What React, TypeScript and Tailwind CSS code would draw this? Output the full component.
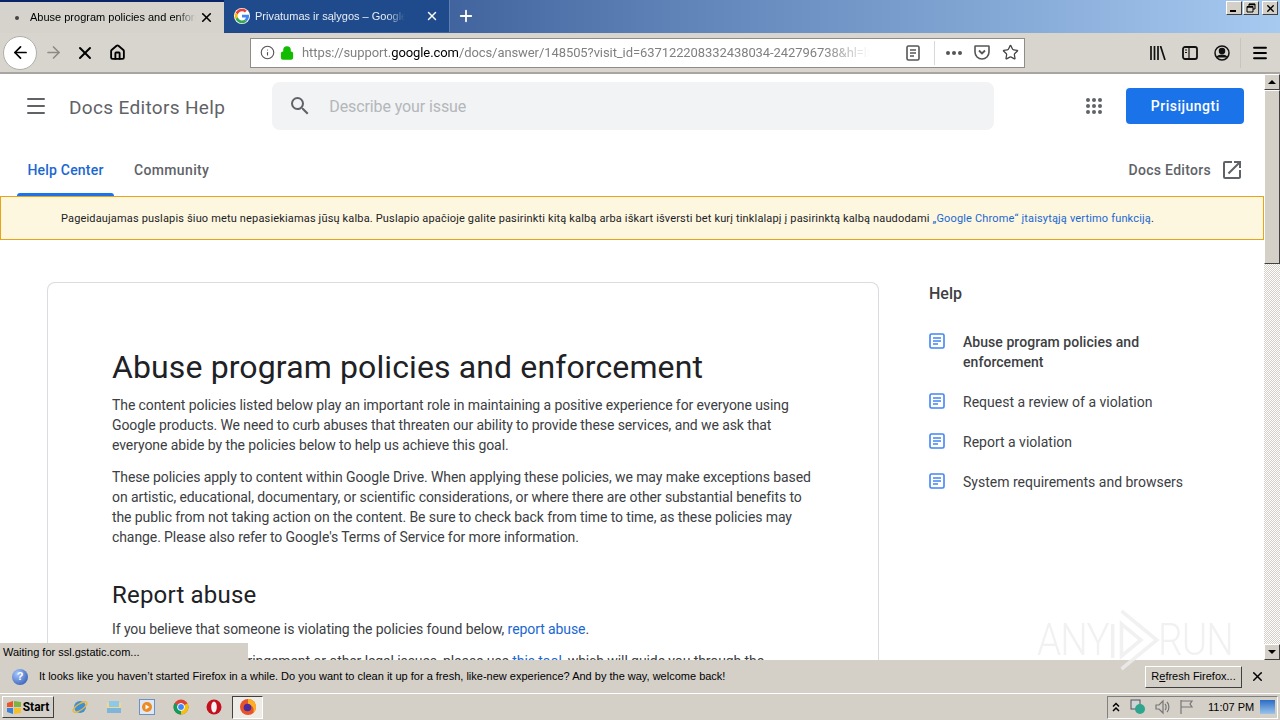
import { X, Plus, Home, Info, Lock, ArrowLeft, ArrowRight, Star, Menu } from "lucide-react";

const helpLinks = [
  "Abuse program policies and enforcement",
  "Request a review of a violation",
  "Report a violation",
  "System requirements and browsers",
];

const bevel = "border border-t-white border-l-white border-r-[#404040] border-b-[#404040] bg-[#d4d0c8]";

function DocIcon() {
  return (
    <svg width="16" height="16" viewBox="0 0 16 16" className="mt-[1px] shrink-0" fill="none" stroke="#4285f4">
      <rect x="1" y="1" width="14" height="14" rx="1.5" strokeWidth="1.6" />
      <path d="M4 5h8M4 8h8M4 11h5" strokeWidth="1.4" />
    </svg>
  );
}

function GoogleG() {
  return (
    <svg width="16" height="16" viewBox="0 0 48 48" className="shrink-0">
      <circle cx="24" cy="24" r="24" fill="#fff" />
      <path fill="#EA4335" d="M24 10c3.5 0 6.4 1.2 8.7 3.3l5.6-5.6C34.8 4.5 29.9 2.5 24 2.5 15.5 2.5 8.3 7.4 4.8 14.5l6.6 5.1C13 14.2 18 10 24 10z" />
      <path fill="#4285F4" d="M45 24.5c0-1.5-.1-2.9-.4-4.3H24v8.2h11.8c-.5 2.7-2 5-4.4 6.6l6.5 5C42.4 35.8 45 30.7 45 24.5z" />
      <path fill="#FBBC05" d="M11.4 28.4C11 27 10.7 25.5 10.7 24s.3-3 .7-4.4l-6.6-5.1C3.4 17.3 2.5 20.5 2.5 24s.9 6.7 2.3 9.5l6.6-5.1z" />
      <path fill="#34A853" d="M24 45.5c5.9 0 10.8-1.9 14.4-5.3l-6.5-5c-2 1.3-4.5 2.1-7.9 2.1-6 0-11-4.2-12.6-9.7l-6.6 5.1C8.3 40.6 15.5 45.5 24 45.5z" />
    </svg>
  );
}

function TabStrip() {
  return (
    <div className="flex h-[33px] shrink-0 bg-gradient-to-r from-[#0a246a] via-[#5b7fb4] to-[#a6caf0] font-['Liberation_Sans',sans-serif] text-[11px]">
      <div className="flex h-full w-[224px] items-center border-t-2 border-[#0a246a] bg-[#d6d3cc] pl-[15px] pr-[10px] text-black">
        <span className="mr-[11px] h-[4px] w-[4px] rounded-full bg-[#444]" />
        <span className="w-[166px] overflow-hidden whitespace-nowrap [mask-image:linear-gradient(to_right,black_88%,transparent)]">Abuse program policies and enforcement</span>
        <X size={15} strokeWidth={2.6} className="ml-auto" />
      </div>
      <div className="flex h-[32px] w-[226px] items-center border-r border-[#5f7fb0] bg-[#1f4a8c] px-[10px] text-[#e8eef6]">
        <GoogleG />
        <span className="ml-[5px] w-[150px] overflow-hidden whitespace-nowrap [mask-image:linear-gradient(to_right,black_88%,transparent)]">Privatumas ir sąlygos – Google</span>
        <X size={14} strokeWidth={2.4} className="ml-auto text-white" />
      </div>
      <Plus size={18} strokeWidth={2.4} className="ml-[7px] mt-[7px] text-white" />
      <div className="ml-auto mr-[2px] mt-[1px] flex gap-[1px]">
        <div className={`flex h-[14px] w-[16px] items-end pb-[2px] pl-[3px] ${bevel}`}>
          <span className="h-[2px] w-[6px] bg-black" />
        </div>
        <div className={`flex h-[14px] w-[16px] items-center justify-center ${bevel}`}>
          <svg width="10" height="10" viewBox="0 0 10 10" fill="none" stroke="#000">
            <path d="M3 3V1h6v5H7M1 3.5h6v5.5H1z" />
            <path d="M3 1.5h6M1 4h6" strokeWidth="1.5" />
          </svg>
        </div>
        <div className={`ml-[2px] flex h-[14px] w-[16px] items-center justify-center ${bevel}`}>
          <X size={11} strokeWidth={3} />
        </div>
      </div>
    </div>
  );
}

function Toolbar() {
  return (
    <div className="flex h-[41px] shrink-0 items-center border-b-2 border-[#a8a6a0] bg-[#d8d5ce] pl-[3px] text-black">
      <div className="flex h-[34px] w-[34px] items-center justify-center rounded-full border border-[#b0aea8] bg-white">
        <ArrowLeft size={19} strokeWidth={2.2} />
      </div>
      <ArrowRight size={19} strokeWidth={2} className="ml-[7px] text-[#8a8a86]" />
      <X size={20} strokeWidth={2.4} className="ml-[12px]" />
      <Home size={17} strokeWidth={2.6} className="ml-[14px]" />
      <div className="ml-[124px] flex h-[30px] w-[775px] items-center border border-[#8f8d88] bg-white pl-[9px] text-[13px] text-[#808080]">
        <Info size={15} strokeWidth={1.8} className="shrink-0 text-[#555]" />
        <Lock size={14} strokeWidth={3} className="ml-[5px] shrink-0 text-[#12bc00]" fill="#12bc00" />
        <span className="ml-[8px] w-[568px] shrink-0 overflow-hidden whitespace-nowrap tracking-[-0.08px] [mask-image:linear-gradient(to_right,black_92%,transparent)]">
          https://support.<span className="text-black">google.com</span>/docs/answer/148505?visit_id=637122208332438034-242796738&amp;hl=lt
        </span>
        <svg width="14" height="16" viewBox="0 0 14 16" fill="none" stroke="#555" strokeWidth="1.6" className="ml-[36px] shrink-0">
          <rect x="1" y="1" width="12" height="14" rx="1.5" />
          <path d="M4 5h6M4 8h6M4 11h4" />
        </svg>
        <div className="ml-[14px] h-[24px] w-px shrink-0 bg-[#d8d8d8]" />
        <span className="ml-[11px] flex shrink-0 gap-[2px]">
          {[0, 1, 2].map((d) => (
            <span key={d} className="h-[4px] w-[4px] rounded-full bg-[#555]" />
          ))}
        </span>
        <svg width="16" height="15" viewBox="0 0 16 15" fill="none" stroke="#555" strokeWidth="1.6" className="ml-[12px] shrink-0">
          <path d="M1.5 1h13a.5.5 0 0 1 .5.5V7a7 7 0 0 1-14 0V1.5a.5.5 0 0 1 .5-.5z" />
          <path d="M5 5.5l3 3 3-3" strokeWidth="1.8" />
        </svg>
        <Star size={17} strokeWidth={1.8} className="ml-[12px] shrink-0 text-[#444]" />
      </div>
      <svg width="16" height="14" viewBox="0 0 16 14" fill="none" stroke="#111" strokeWidth="1.7" className="ml-[125px]">
        <path d="M1 0v14M4.5 0v14M8 0v14M10.5 0l4.5 14" />
      </svg>
      <svg width="16" height="14" viewBox="0 0 16 14" fill="none" stroke="#111" strokeWidth="1.8" className="ml-[16px]">
        <rect x="1" y="1" width="14" height="12" rx="2" />
        <path d="M7 1v12M3 4h2M3 6.5h2" strokeWidth="1.2" />
      </svg>
      <svg width="16" height="16" viewBox="0 0 16 16" fill="none" stroke="#111" strokeWidth="1.5" className="ml-[16px]">
        <circle cx="8" cy="8" r="7" />
        <circle cx="8" cy="6" r="2.5" fill="#111" />
        <path d="M3 12.5c1.5-3 8.5-3 10 0" fill="#111" />
      </svg>
      <div className="ml-[10px] h-[30px] w-px bg-[#c8c5be]" />
      <Menu size={18} strokeWidth={2.4} className="ml-[10px]" />
    </div>
  );
}

function Scrollbar() {
  return (
    <div className="flex w-[16px] shrink-0 flex-col bg-[repeating-conic-gradient(#d4d0c8_0%_25%,#ffffff_0%_50%)] bg-[length:2px_2px]">
      <div className={`flex h-[16px] items-center justify-center ${bevel}`}>
        <span className="h-0 w-0 border-x-[4px] border-b-[4px] border-x-transparent border-b-black" />
      </div>
      <div className={`h-[174px] ${bevel}`} />
      <div className={`mt-auto flex h-[16px] items-center justify-center ${bevel}`}>
        <span className="h-0 w-0 border-x-[4px] border-t-[4px] border-x-transparent border-t-black" />
      </div>
    </div>
  );
}

function PageHeader() {
  return (
    <div className="flex h-[63px] shrink-0 items-start text-[#5f6368]">
      <Menu size={24} strokeWidth={2} className="ml-[24px] mt-[20px]" />
      <span className="ml-[21px] mt-[20px] text-[19px] leading-[27px] tracking-[0.34px]">Docs Editors Help</span>
      <div className="ml-[47px] mt-[8px] flex h-[48px] w-[722px] items-center rounded-lg bg-[#f1f3f4] pl-[16px]">
        <svg width="24" height="24" viewBox="0 0 24 24" fill="#5f6368">
          <path d="M15.5 14h-.79l-.28-.27A6.471 6.471 0 0 0 16 9.5 6.5 6.5 0 1 0 9.5 16c1.61 0 3.09-.59 4.23-1.57l.27.28v.79l5 4.99L20.49 19l-4.99-5zm-6 0C7.01 14 5 11.99 5 9.5S7.01 5 9.5 5 14 7.01 14 9.5 11.99 14 9.5 14z" />
        </svg>
        <span className="ml-[17px] pt-[1px] text-[16px] tracking-[-0.1px] text-[#b4b7ba]">Describe your issue</span>
      </div>
      <div className="ml-[92px] mt-[24px] grid w-[16px] grid-cols-3 gap-[2px]">
        {[0, 1, 2, 3, 4, 5, 6, 7, 8].map((d) => (
          <span key={d} className="h-[4px] w-[4px] rounded-full bg-[#5f6368]" />
        ))}
      </div>
      <div className="ml-[24px] mt-[14px] flex h-[36px] w-[118px] items-center justify-center rounded bg-[#1a73e8] text-[14px] font-medium tracking-[0.5px] text-white">
        Prisijungti
      </div>
    </div>
  );
}

function PageTabs() {
  return (
    <div className="flex h-[59px] shrink-0 items-start text-[14px] text-[#5f6368]">
      <div className="ml-[17px] flex h-[59px] w-[97px] flex-col items-center">
        <span className="mt-[23px] font-medium tracking-[0.2px] text-[#1a67d2]">Help Center</span>
        <div className="mt-auto h-[3px] w-full rounded-t-[3px] bg-[#1a73e8]" />
      </div>
      <span className="ml-[20px] mt-[23px] font-medium tracking-[0.35px]">Community</span>
      <span className="ml-auto mt-[23px] font-medium tracking-[0.3px]">Docs Editors</span>
      <svg width="24" height="24" viewBox="0 0 24 24" fill="#5f6368" className="ml-[9px] mr-[20px] mt-[21px]">
        <path d="M19 19H5V5h7V3H5a2 2 0 0 0-2 2v14a2 2 0 0 0 2 2h14c1.1 0 2-.9 2-2v-7h-2v7zM14 3v2h3.59l-9.83 9.83 1.41 1.41L19 6.41V10h2V3h-7z" />
      </svg>
    </div>
  );
}

function Article() {
  return (
    <div className="ml-[47px] w-[832px] shrink-0 rounded-t-lg border border-b-0 border-[#dadce0] pl-[64px] pr-[56px] pt-[62px] text-[14px] leading-[20px] tracking-[-0.09px] text-[#3c4043]">
      <h1 className="text-[32px] leading-[44px] tracking-[0.12px] text-[#202124]">Abuse program policies and enforcement</h1>
      <p className="mt-[6px]">
        The content policies listed below play an important role in maintaining a positive experience for everyone using Google products. We need to curb abuses that threaten our ability to provide these services, and we ask that everyone abide by the policies below to help us achieve this goal.
      </p>
      <p className="mt-[12px]">
        These policies apply to content within Google Drive. When applying these policies, we may make exceptions based on artistic, educational, documentary, or scientific considerations, or where there are other substantial benefits to the public from not taking action on the content. Be sure to check back from time to time, as these policies may change. Please also refer to Google's Terms of Service for more information.
      </p>
      <h2 className="mt-[32px] text-[24px] leading-[32px] tracking-[0.2px] text-[#202124]">Report abuse</h2>
      <p className="mt-[8px]">
        If you believe that someone is violating the policies found below, <span className="text-[#1a67d2]">report abuse</span>.
      </p>
      <p className="mt-[12px] whitespace-nowrap">
        To report copyright infringement or other legal issues, please use <span className="text-[#1a67d2]">this tool</span>, which will guide you through the
      </p>
    </div>
  );
}

function HelpSidebar() {
  return (
    <div className="ml-[50px] w-[262px] shrink-0 text-[14px] leading-[20px] text-[#3c4043]">
      <div className="text-[16px] font-medium leading-[24px] text-[#3c4043]">Help</div>
      <ul className="mt-[26px] flex flex-col gap-[20px]">
        {helpLinks.map((label, i) => (
          <li key={label} className="flex gap-[18px]">
            <DocIcon />
            <span className={i === 0 ? "font-medium tracking-[0.05px]" : ""}>{label}</span>
          </li>
        ))}
      </ul>
    </div>
  );
}

function Taskbar() {
  return (
    <div className="flex h-[27px] shrink-0 items-center border-t border-white bg-[#d4d0c8] pl-[2px]">
      <div className="flex h-[22px] w-[52px] items-center justify-center gap-[2px] border border-t-white border-l-white border-r-[#404040] border-b-[#404040] text-[12px] font-bold text-black">
        <svg width="14" height="13" viewBox="0 0 14 13">
          <path d="M0 2l6-2v6H0z" fill="#e8562a" />
          <path d="M7 0l7 1v5H7z" fill="#7cb342" />
          <path d="M0 7h6v6l-6-2z" fill="#3b82d6" />
          <path d="M7 7h7v5l-7 1z" fill="#f5c02c" />
        </svg>
        Start
      </div>
      <div className="ml-[18px] flex items-center gap-[17.5px]">
        <svg width="16" height="16" viewBox="0 0 16 16">
          <circle cx="8" cy="8" r="6" fill="#3f8ed8" />
          <ellipse cx="8" cy="8" rx="8" ry="3" fill="none" stroke="#e6b93a" strokeWidth="1.3" transform="rotate(-35 8 8)" />
        </svg>
        <svg width="16" height="16" viewBox="0 0 16 16">
          <path d="M1 4h14v10H1z" fill="#f2d98a" />
          <path d="M3 2h10v6H3z" fill="#8cc8e8" />
          <path d="M1 9h14v5H1z" fill="#7fb5d8" />
        </svg>
        <svg width="16" height="16" viewBox="0 0 16 16">
          <rect x="0.5" y="0.5" width="15" height="15" fill="#dfe9f5" stroke="#6a93c4" />
          <circle cx="8" cy="8" r="5" fill="#ee8a24" />
          <path d="M6.5 5.5l4 2.5-4 2.5z" fill="#fff" />
        </svg>
        <svg width="16" height="16" viewBox="0 0 16 16">
          <circle cx="8" cy="8" r="7.5" fill="#db4437" />
          <path d="M8 8L14.5 4.3A7.5 7.5 0 0 1 8 15.5z" fill="#f4c20d" />
          <path d="M8 8L8 15.5A7.5 7.5 0 0 1 1.5 4.3z" fill="#0f9d58" />
          <circle cx="8" cy="8" r="3.5" fill="#4285f4" stroke="#fff" />
        </svg>
        <svg width="16" height="16" viewBox="0 0 16 16">
          <circle cx="8" cy="8" r="7.5" fill="#c4101c" />
          <ellipse cx="8" cy="8" rx="2.8" ry="5.5" fill="#f4f4f4" />
        </svg>
      </div>
      <div className="ml-[10px] flex h-[23px] w-[31px] items-center justify-center border border-t-[#404040] border-l-[#404040] border-r-white border-b-white bg-[#eeece6]">
        <svg width="18" height="18" viewBox="0 0 18 18">
          <circle cx="9" cy="9" r="8" fill="#e8542a" />
          <path d="M9 1a8 8 0 0 1 8 8c0 3-1.5 5-3 6 1-2 1-5-1-7-1-1-3-1-4 0 0-3 0-5 0-7z" fill="#ffb01f" />
          <circle cx="8.5" cy="9.5" r="3.8" fill="#4a2a9c" />
        </svg>
      </div>
      <div className="ml-auto mr-[2px] flex h-[23px] w-[171px] items-center border border-t-[#808080] border-l-[#808080] border-r-white border-b-white pl-[4px] font-['Liberation_Sans',sans-serif] text-[11px] text-black">
        <svg width="8" height="10" viewBox="0 0 8 10" fill="none" stroke="#000" strokeWidth="1.5">
          <path d="M1 4.5l3-3 3 3M1 9l3-3 3 3" />
        </svg>
        <svg width="16" height="16" viewBox="0 0 16 16" className="ml-[10px]">
          <rect x="1" y="1" width="9" height="9" fill="#cfd4da" stroke="#555" />
          <circle cx="10" cy="10" r="5" fill="#2fa58e" />
        </svg>
        <svg width="16" height="16" viewBox="0 0 16 16" fill="none" stroke="#777" strokeWidth="1.2" className="ml-[8px]">
          <path d="M2 6h3l4-4v12l-4-4H2zM11 5c1.5 1.5 1.5 4.5 0 6M13 3c2.5 2.5 2.5 7.5 0 10" />
        </svg>
        <svg width="16" height="16" viewBox="0 0 16 16" fill="none" stroke="#777" strokeWidth="1.2" className="ml-[8px]">
          <path d="M3 1v14M3 2h11l-2 3 2 3H3" />
        </svg>
        <span className="ml-[14px] whitespace-nowrap">11:07 PM</span>
        <div className="ml-auto mr-[2px] h-[14px] w-[15px] bg-gradient-to-b from-[#2a6cc4] to-[#9cc4ea]" />
      </div>
    </div>
  );
}

export default function App() {
  return (
    <div className="relative flex h-screen w-[1280px] flex-col overflow-hidden bg-white font-['Roboto',sans-serif]">
      <TabStrip />
      <Toolbar />
      <div className="flex min-h-0 flex-1">
        <div className="flex min-w-0 flex-1 flex-col overflow-hidden">
          <PageHeader />
          <PageTabs />
          <div className="flex h-[44px] shrink-0 items-center border border-[#e8a317] bg-[#fef7e0] pl-[60px] pt-[2px] text-[11px] tracking-[0.16px] text-[#202124]">
            <span className="whitespace-nowrap">
              Pageidaujamas puslapis šiuo metu nepasiekiamas jūsų kalba. Puslapio apačioje galite pasirinkti kitą kalbą arba iškart išversti bet kurį tinklalapį į pasirinktą kalbą naudodami <span className="text-[#1a67d2]">„Google Chrome“ įtaisytąją vertimo funkciją</span>.
            </span>
          </div>
          <div className="flex flex-1 pt-[42px]">
            <Article />
            <HelpSidebar />
          </div>
        </div>
        <Scrollbar />
      </div>
      <div className="flex h-[33px] shrink-0 items-center bg-[#d4d0c8] pl-[12px] pr-[15px] font-['Liberation_Sans',sans-serif] text-[11px] text-black">
        <span className="flex h-[16px] w-[16px] items-center justify-center rounded-full bg-radial-[at_35%_30%] from-[#a8c8ff] to-[#1f4aa8] text-[11px] font-bold text-white">?</span>
        <span className="ml-[11px]">It looks like you haven’t started Firefox in a while. Do you want to clean it up for a fresh, like-new experience? And by the way, welcome back!</span>
        <div className="ml-auto flex h-[22px] w-[97px] items-center justify-center border border-t-white border-l-white border-r-[#404040] border-b-[#404040]">
          <span>R<span className="underline">e</span>fresh Firefox...</span>
        </div>
        <X size={15} strokeWidth={2.4} className="ml-[8px]" />
      </div>
      <Taskbar />
      <div className="absolute bottom-[59px] left-0 flex h-[18px] w-[248px] items-center bg-[#d4d0c8] pl-[3px] pt-[1px] font-['Liberation_Sans',sans-serif] text-[11px] text-black">
        Waiting for ssl.gstatic.com...
      </div>
      <div className="absolute bottom-[48px] left-[1037px] flex origin-left scale-x-[0.88] items-center text-[44px] font-light leading-none tracking-[-1px] text-[#eeeeee] opacity-80">
        ANY
        <svg width="60" height="64" viewBox="0 0 60 64" fill="none" stroke="#eeeeee" strokeWidth="4" className="-mx-[2px]">
          <path d="M16 3l40 29-40 29M6 16v34M16 16l22 16-22 16z" />
        </svg>
        RUN
      </div>
    </div>
  );
}
